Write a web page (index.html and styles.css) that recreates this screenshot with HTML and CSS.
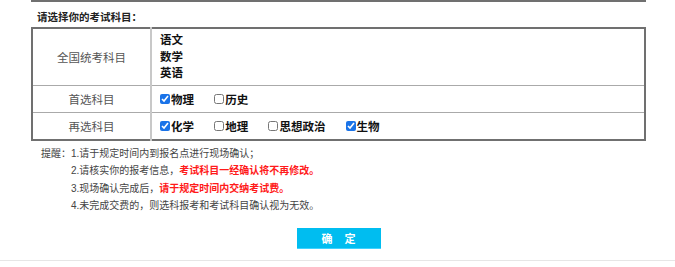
FILE: index.html
```html
<!DOCTYPE html>
<html>

<head>
    <title>确认考试科目</title>
    <meta charset="UTF-8">
    <link rel="stylesheet" href="styles.css">
</head>

<body>
    <div class="page">
        <table class="info-table">
            <tr>
                <td class="c1"></td>
                <td class="c2"></td>
                <td class="c3"></td>
                <td class="c4"></td>
            </tr>
        </table>

        <h4 class="title">请选择你的考试科目：</h4>
        <table class="subject-table">
            <tr class="row-tall">
                <td class="label">全国统考科目</td>
                <td class="value bold">
                    <div>语文</div>
                    <div>数学</div>
                    <div>英语</div>
                </td>
            </tr>
            <tr>
                <td class="label">首选科目</td>
                <td class="value">
                    <label class="opt"><input type="checkbox" checked>物理</label>
                    <label class="opt"><input type="checkbox">历史</label>
                </td>
            </tr>
            <tr>
                <td class="label">再选科目</td>
                <td class="value">
                    <label class="opt"><input type="checkbox" checked>化学</label>
                    <label class="opt"><input type="checkbox">地理</label>
                    <label class="opt"><input type="checkbox">思想政治</label>
                    <label class="opt"><input type="checkbox" checked>生物</label>
                </td>
            </tr>
        </table>

        <div class="notes">
            <span class="notes-head">提醒：</span>
            <ul>
                <li>1.请于规定时间内到报名点进行现场确认；</li>
                <li>2.请核实你的报考信息，<b class="red">考试科目一经确认将不再修改。</b></li>
                <li>3.现场确认完成后，<b class="red">请于规定时间内交纳考试费。</b></li>
                <li>4.未完成交费的，则选科报考和考试科目确认视为无效。</li>
            </ul>
        </div>

        <div class="actions">
            <button type="button">确&nbsp;&nbsp;&nbsp;&nbsp;定</button>
        </div>
    </div>
    <div class="footer-line"></div>
</body>

</html>
```

FILE: styles.css
```css
body {
    margin: 0;
    font-family: "Liberation Sans", "Noto Sans CJK SC", sans-serif;
    font-size: 10px;
    color: #333;
    background: #fff;
}

.page {
    width: 615px;
    margin-left: 31px;
}

table {
    border-collapse: collapse;
    width: 100%;
}

.info-table {
    margin-top: -8px;
    border: 2px solid #707070;
    border-top: none;
}

.info-table td {
    height: 8px;
    border-left: 1px solid #aaa;
    padding: 0;
}

.info-table .c1 { width: 118px; }
.info-table .c2 { width: 230px; }
.info-table .c3 { width: 96px; }

.title {
    margin: 8px 0 3px 6px;
    font-size: 10.5px;
    font-weight: bold;
    line-height: 14px;
    color: #222;
}

.subject-table {
    border: 2px solid #707070;
}

.subject-table td {
    border: 1px solid #aaa;
    padding: 0;
}

.subject-table .label {
    width: 117px;
    text-align: center;
    font-size: 11.5px;
    color: #555;
    border-right: 2px solid #c8c8c8;
    height: 26px;
}

.subject-table .value {
    padding-left: 8px;
    font-size: 11.5px;
    color: #111;
}

.row-tall td {
    height: 56px;
}

.bold {
    font-weight: bold;
    line-height: 16.5px;
}

.opt {
    display: inline-flex;
    align-items: center;
    margin-right: 17px;
    font-size: 11.5px;
    font-weight: bold;
}

.opt input {
    width: 10px;
    height: 10px;
    margin: 0 1px 0 0;
    accent-color: #1a73e8;
}

.notes {
    display: flex;
    margin: 4px 0 0 10px;
    line-height: 17.3px;
    color: #444;
}

.notes ul {
    list-style: none;
    margin: 0;
    padding: 0;
}

.red {
    color: #ff1a1a;
}

.actions {
    margin-top: 14px;
    text-align: center;
}

button {
    width: 84px;
    height: 21px;
    border: none;
    border-bottom: 1px solid #3fd2ff;
    background-color: #00bdf0;
    color: #fff;
    font-weight: bold;
    font-size: 11px;
    font-family: inherit;
    cursor: pointer;
}

.footer-line {
    margin-top: 11px;
    border-top: 1px solid #e6e6e6;
}
```
